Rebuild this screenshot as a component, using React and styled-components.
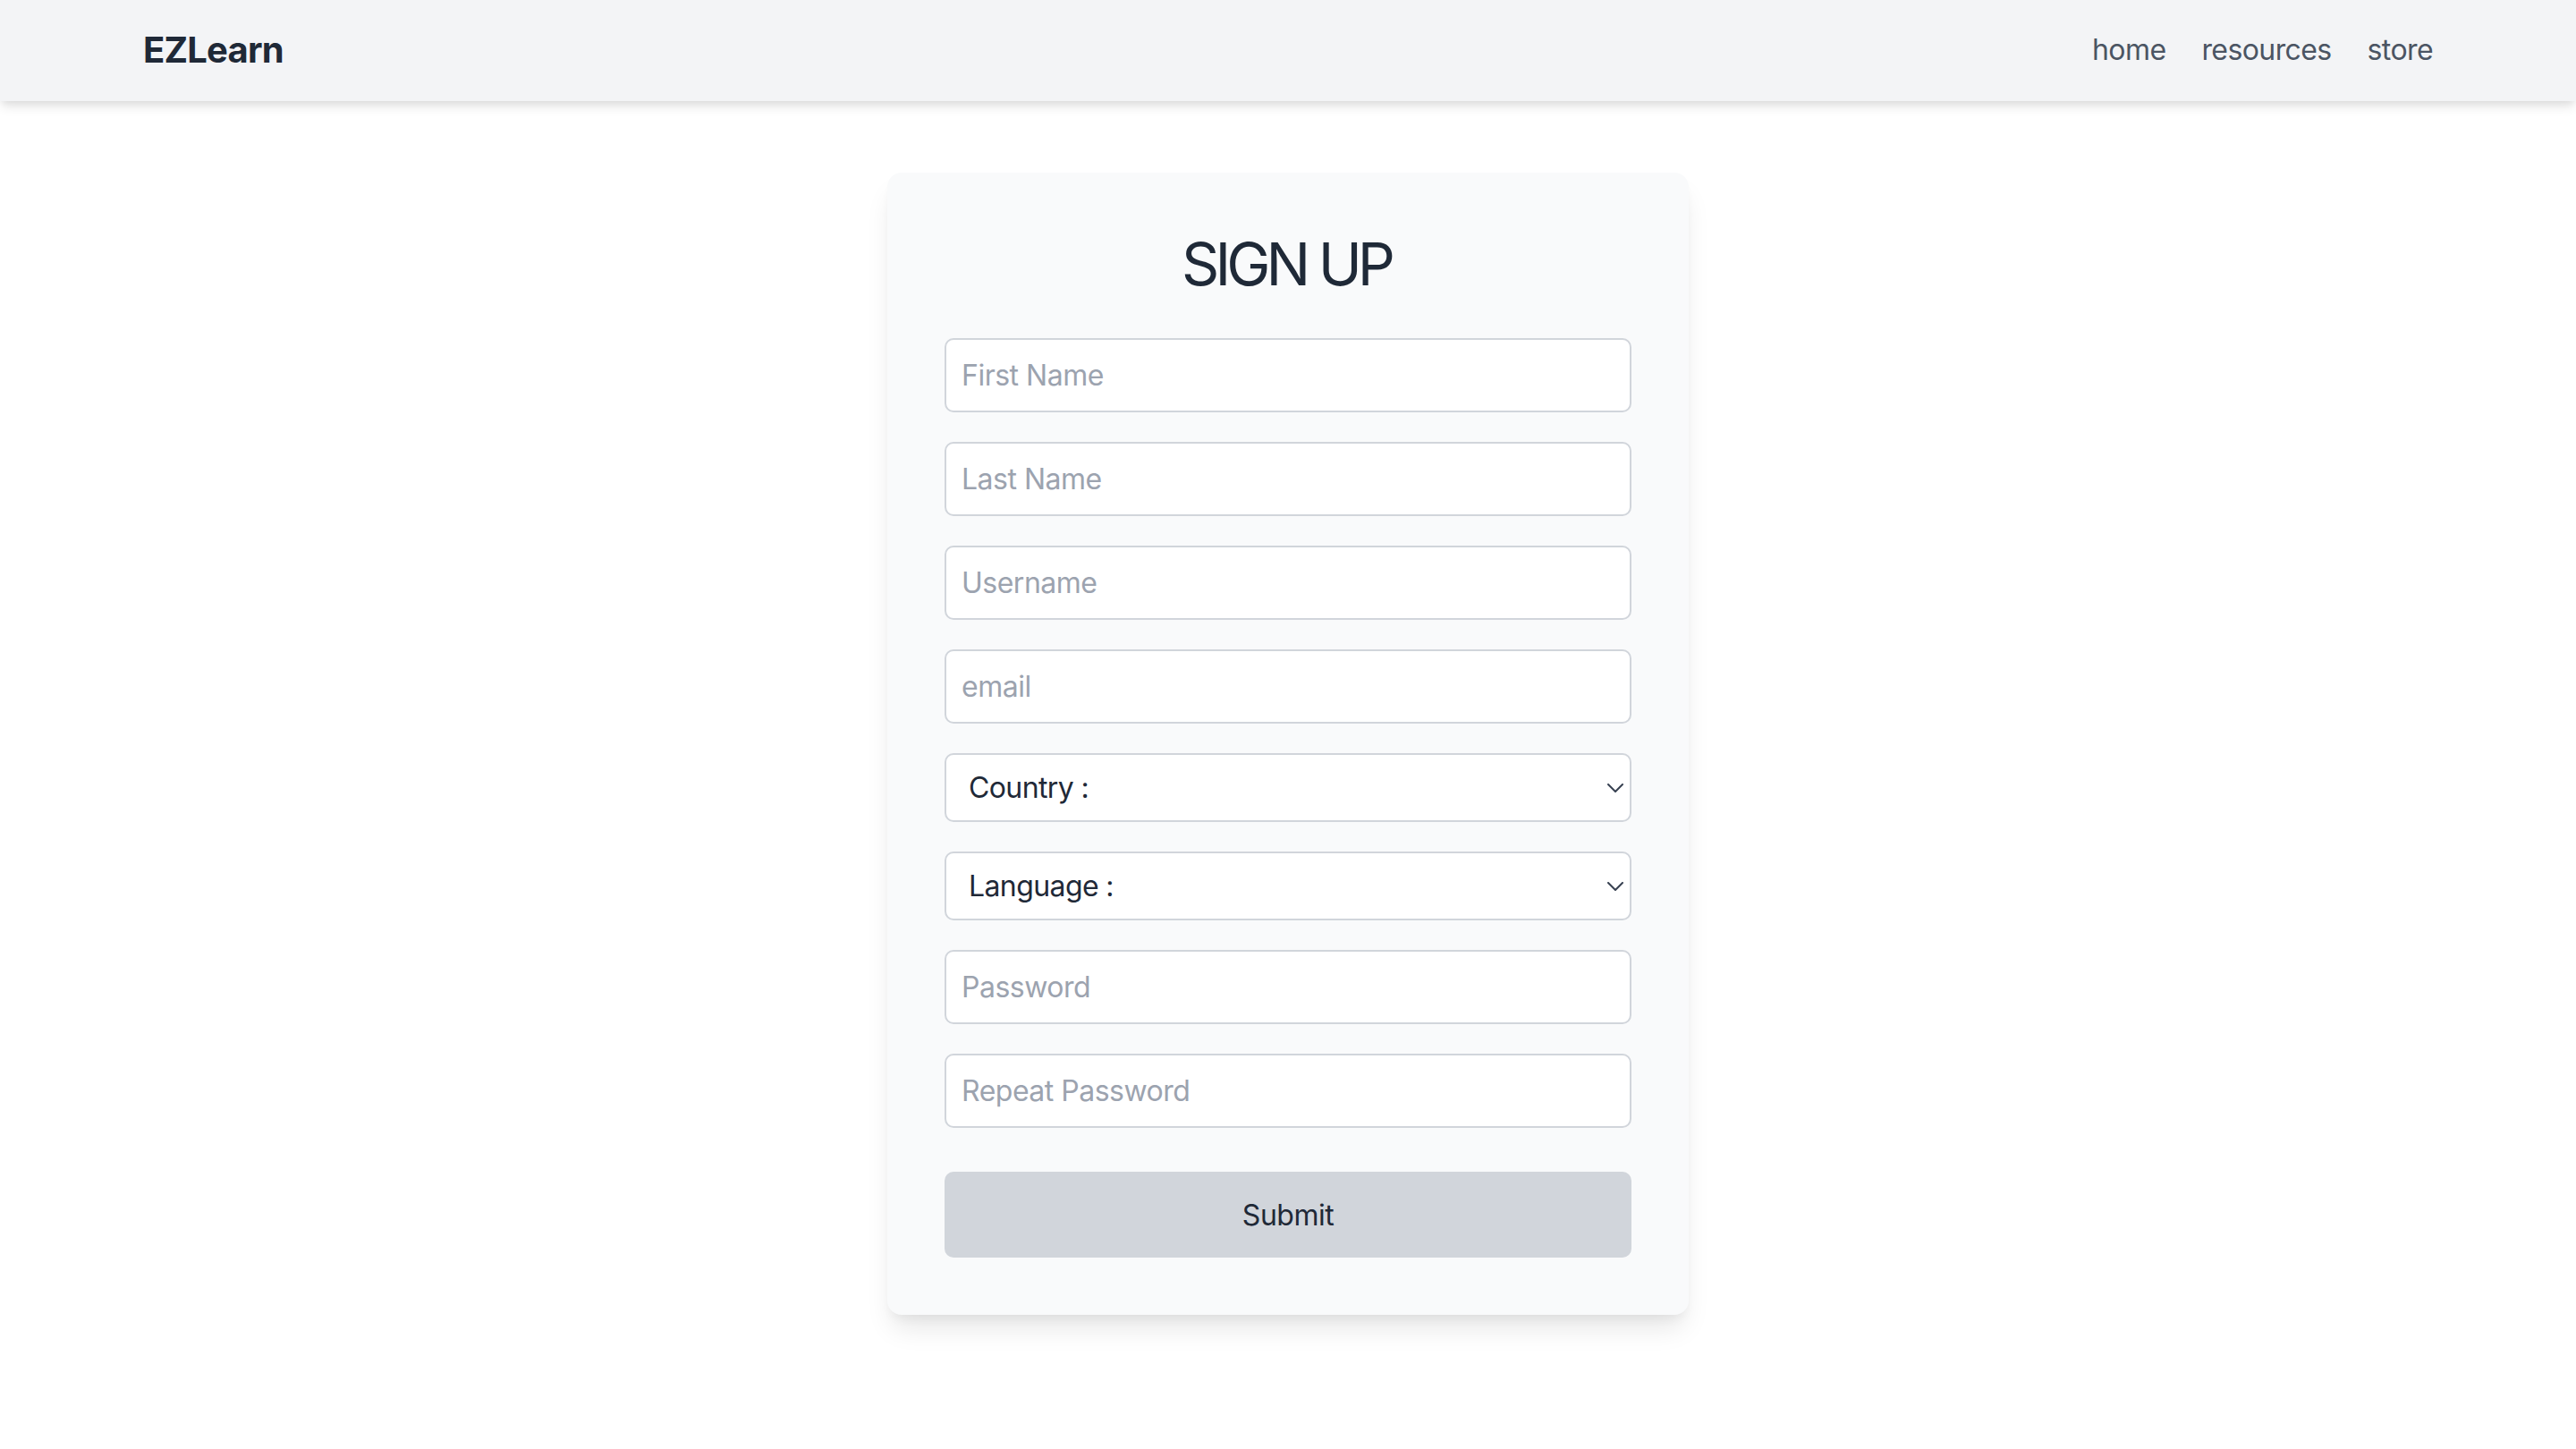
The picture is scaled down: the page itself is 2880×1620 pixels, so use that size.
import React from "react";
import styled, { createGlobalStyle } from "styled-components";

const GlobalStyle = createGlobalStyle`
  * {
    box-sizing: border-box;
  }
  body {
    margin: 0;
    background: #ffffff;
    font-family: Inter, "Noto Sans", "Liberation Sans", sans-serif;
    color: #1f2937;
  }
`;

const Navbar = styled.nav`
  height: 113px;
  padding: 0 160px 3px;
  display: flex;
  align-items: center;
  justify-content: space-between;
  background: #f3f4f6;
  box-shadow: 0 8px 12px -2px rgba(0, 0, 0, 0.1),
    0 4px 8px -2px rgba(0, 0, 0, 0.06);
  position: relative;
  z-index: 1;
`;

const Brand = styled.a`
  font-size: 40px;
  font-weight: 700;
  color: #1f2937;
  text-decoration: none;
  letter-spacing: -0.8px;
`;

const NavLinks = styled.ul`
  display: flex;
  gap: 40px;
  list-style: none;
  margin: 0;
  padding: 0;
`;

const NavLink = styled.a`
  font-size: 32px;
  color: #4b5563;
  text-decoration: none;
  letter-spacing: -0.6px;
`;

const Main = styled.main`
  display: flex;
  justify-content: center;
  padding: 80px 0 120px;
`;

const Card = styled.form`
  width: 896px;
  padding: 64px;
  background: #f9fafb;
  border-radius: 16px;
  box-shadow: 0 20px 30px -6px rgba(0, 0, 0, 0.1),
    0 8px 12px -4px rgba(0, 0, 0, 0.05);
  display: flex;
  flex-direction: column;
  gap: 33px;
`;

const Title = styled.h1`
  margin: 0 0 12px;
  padding-right: 4px;
  font-size: 66px;
  line-height: 76px;
  font-weight: 400;
  text-align: center;
  color: #1f2937;
  letter-spacing: -5px;
`;

const TextInput = styled.input`
  width: 100%;
  height: 83px;
  padding: 0 17px;
  border: 2px solid #d1d5db;
  border-radius: 10px;
  background: #ffffff;
  font-family: inherit;
  font-size: 32px;
  color: #1f2937;
  letter-spacing: -0.5px;
  outline: none;

  &::placeholder {
    color: #9ca3af;
  }
`;

const SelectWrap = styled.div`
  position: relative;
`;

const Select = styled.select`
  width: 100%;
  height: 77px;
  padding: 0 60px 0 25px;
  border: 2px solid #d1d5db;
  border-radius: 10px;
  background: #ffffff;
  font-family: inherit;
  font-size: 32px;
  color: #1f2937;
  letter-spacing: -0.6px;
  appearance: none;
  outline: none;
`;

const Chevron = styled.svg`
  position: absolute;
  right: 9px;
  top: 50%;
  transform: translateY(-50%);
  pointer-events: none;
`;

const SubmitButton = styled.button`
  margin-top: 16px;
  height: 96px;
  border: none;
  border-radius: 10px;
  background: #d1d5db;
  font-family: inherit;
  font-size: 32px;
  color: #1f2937;
  letter-spacing: -0.5px;
  cursor: pointer;
`;

const fields = [
  { type: "text", placeholder: "First Name" },
  { type: "text", placeholder: "Last Name" },
  { type: "text", placeholder: "Username" },
  { type: "email", placeholder: "email" },
];

const DropDown = ({ label }) => (
  <SelectWrap>
    <Select defaultValue="">
      <option value="">{label}</option>
    </Select>
    <Chevron width="18" height="10" viewBox="0 0 18 10" fill="none">
      <path
        d="M1 1l8 8 8-8"
        stroke="#374151"
        strokeWidth="2"
        strokeLinecap="round"
        strokeLinejoin="round"
      />
    </Chevron>
  </SelectWrap>
);

export default function App() {
  return (
    <>
      <GlobalStyle />
      <Navbar>
        <Brand href="#">EZLearn</Brand>
        <NavLinks>
          <li>
            <NavLink href="#">home</NavLink>
          </li>
          <li>
            <NavLink href="#">resources</NavLink>
          </li>
          <li>
            <NavLink href="#">store</NavLink>
          </li>
        </NavLinks>
      </Navbar>
      <Main>
        <Card onSubmit={(e) => e.preventDefault()}>
          <Title>SIGN UP</Title>
          {fields.map((f) => (
            <TextInput key={f.placeholder} type={f.type} placeholder={f.placeholder} />
          ))}
          <DropDown label="Country :" />
          <DropDown label="Language :" />
          <TextInput type="password" placeholder="Password" />
          <TextInput type="password" placeholder="Repeat Password" />
          <SubmitButton type="submit">Submit</SubmitButton>
        </Card>
      </Main>
    </>
  );
}
